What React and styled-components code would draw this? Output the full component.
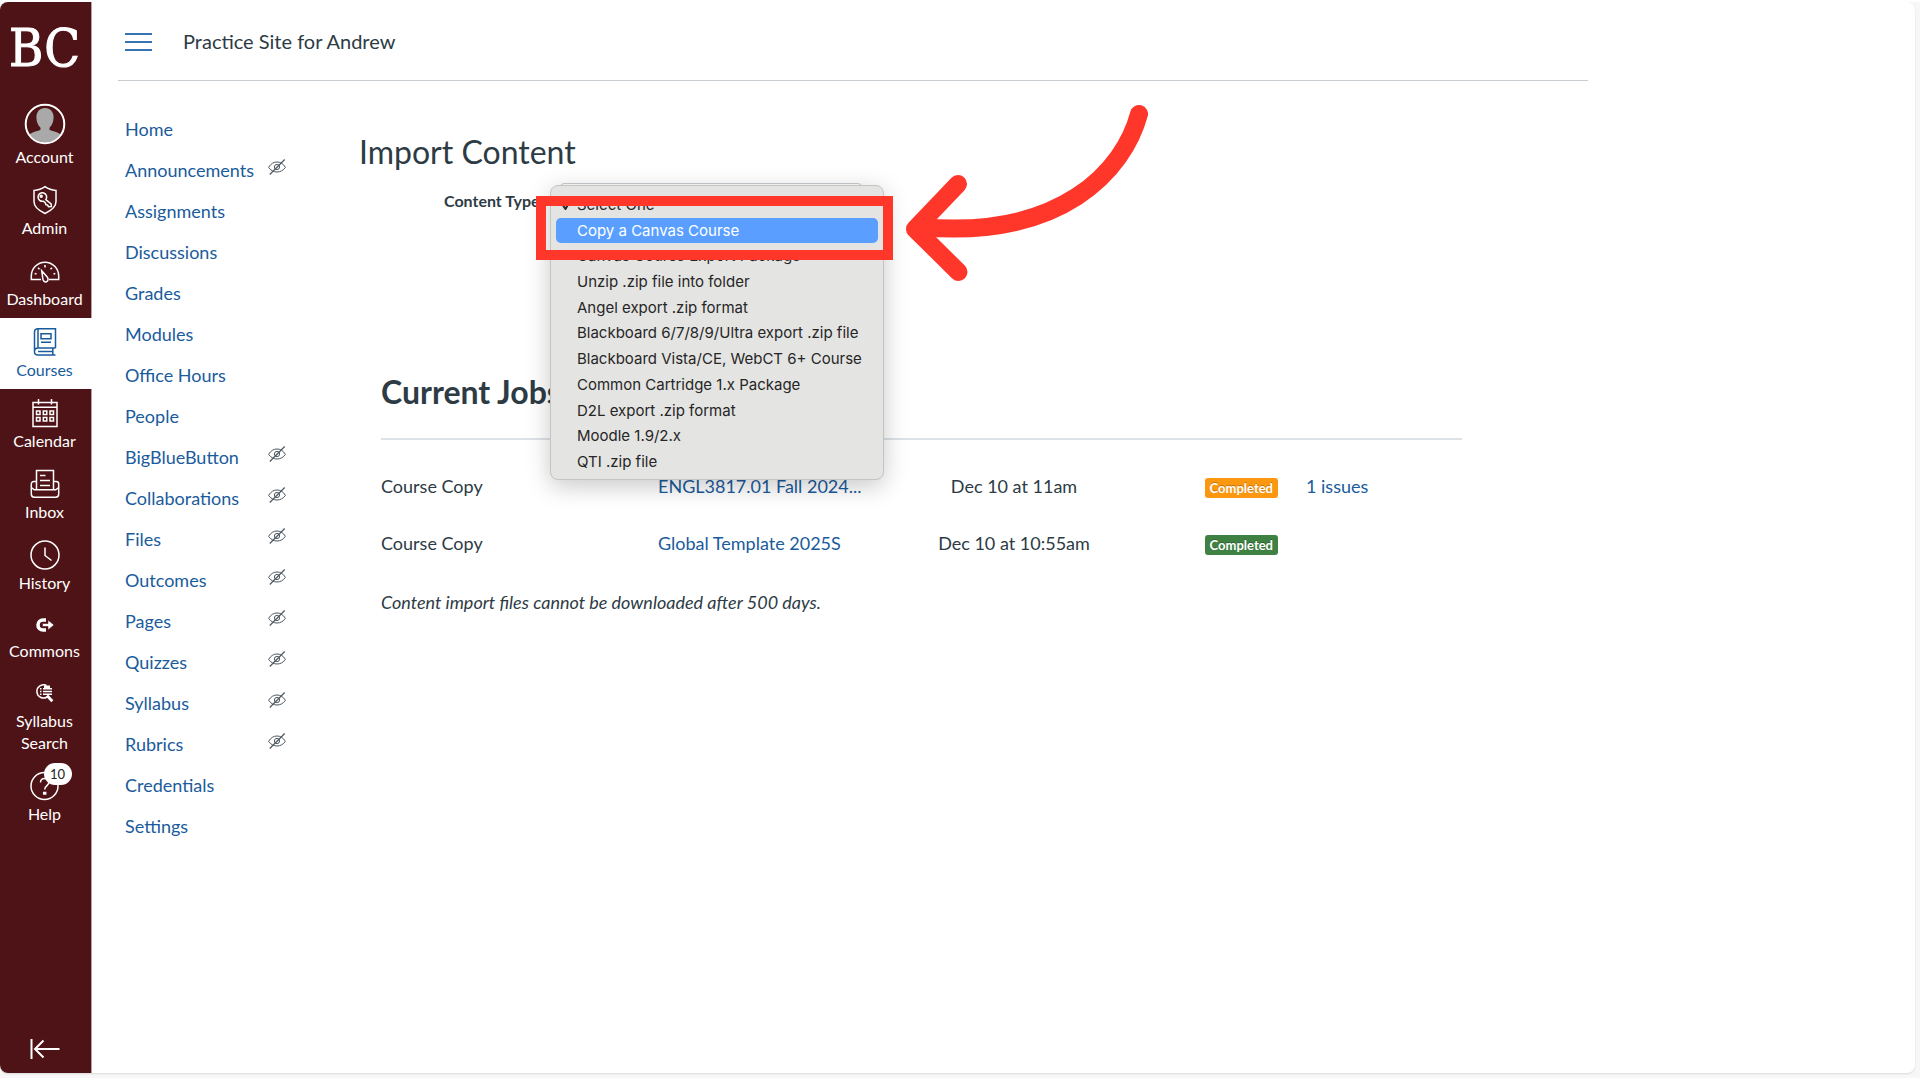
import React, { useState } from "react";
import styled, { createGlobalStyle, css } from "styled-components";

const GlobalStyle = createGlobalStyle`
  * {
    box-sizing: border-box;
  }

  body {
    margin: 0;
    background: #ffffff;
    color: #2d3b45;
    font-family: Lato, "Open Sans", sans-serif;
    font-size: 18px;
    line-height: 24px;
  }
`;

const colors = {
  maroon: "#4e1316",
  link: "#1a5b9c",
  text: "#2d3b45",
  red: "#ff372b",
  rule: "#c7cdd1",
};

/* ---------- page shell ---------- */

const Frame = styled.div`
  display: flex;
  min-height: calc(100vh - 4px);
  margin: 2px 0;
  padding: 0 5px 5px 0;
  background: #f7f7f7;
`;

const Card = styled.div`
  flex: 1;
  display: flex;
  min-width: 0;
  overflow: hidden;
  border-radius: 8px;
  background: #ffffff;
  box-shadow: 0 1px 2px rgba(0, 0, 0, 0.12);
`;

const Content = styled.div`
  flex: 1;
  min-width: 0;
  max-width: 1496px;
  padding-left: 26px;
`;

/* ---------- global navigation ---------- */

const GlobalNav = styled.nav`
  flex: none;
  display: flex;
  flex-direction: column;
  width: 92px;
  border-right: 1px solid #b9a1a2;
  background: ${colors.maroon};
`;

const Logo = styled.a`
  display: flex;
  align-items: center;
  justify-content: center;
  height: 92px;
  padding-right: 2px;
  color: #ffffff;
  font-family: "DejaVu Serif Condensed", "DejaVu Serif", serif;
  font-size: 52px;
  line-height: 60px;
  text-decoration: none;
  -webkit-text-stroke: 1px #ffffff;
`;

const NavItem = styled.a`
  display: flex;
  flex-direction: column;
  align-items: center;
  gap: 2px;
  padding: 9px 2px 8px 0;
  color: #ffffff;
  font-size: 16px;
  line-height: 22px;
  text-align: center;
  text-decoration: none;

  ${(props) =>
    props.$active &&
    css`
      margin-right: -1px;
      padding-right: 3px;
      background: #ffffff;
      color: ${colors.link};
    `}
`;

const NavIcon = styled.span`
  position: relative;
  display: flex;
  align-items: center;
  justify-content: center;
  height: ${(props) => props.$height || 30}px;
`;

const Badge = styled.span`
  position: absolute;
  top: -8px;
  left: 14px;
  width: 28px;
  border-radius: 11px;
  background: #ffffff;
  color: #222222;
  font-size: 13px;
  line-height: 22px;
`;

const Collapse = styled.button`
  display: flex;
  justify-content: center;
  margin-top: auto;
  padding: 9px 2px 9px 0;
  border: 0;
  background: none;
  color: #ffffff;
`;

/* ---------- header ---------- */

const Header = styled.header`
  display: flex;
  align-items: center;
  gap: 31px;
  height: 79px;
  padding-left: 7px;
  border-bottom: 1px solid ${colors.rule};
  font-size: 20px;
`;

const MenuButton = styled.button`
  display: flex;
  flex-direction: column;
  gap: 6px;
  width: 27px;
  padding: 2px 0 0;
  border: 0;
  background: none;

  span {
    height: 2px;
    background: #3574b0;
  }
`;

const Columns = styled.div`
  display: flex;
  align-items: flex-start;
`;

/* ---------- course navigation ---------- */

const CourseNav = styled.ul`
  flex: none;
  width: 241px;
  margin: 0;
  padding: 27px 73px 0 7px;
  list-style: none;

  li {
    display: flex;
    align-items: center;
    justify-content: space-between;
    height: 41px;
  }

  svg {
    margin-bottom: 5px;
  }
`;

const Link = styled.a`
  color: ${colors.link};
  text-decoration: none;
`;

/* ---------- import page ---------- */

const Main = styled.main`
  flex: 1;
  min-width: 0;
  padding-top: 51px;
`;

const Title = styled.h1`
  margin: 0 0 11px;
  font-size: 32px;
  font-weight: 400;
  line-height: 40px;
`;

const FormRow = styled.div`
  display: flex;
  align-items: flex-start;
  padding-left: 85px;

  label {
    width: 116px;
    font-size: 16px;
    font-weight: 700;
    line-height: 36px;
  }
`;

const SelectWrap = styled.div`
  position: relative;
  width: 302px;

  select {
    display: block;
    width: 100%;
    height: 38px;
    border: 1px solid ${colors.rule};
    border-radius: 4px;
    background: #ffffff;
    color: ${colors.text};
    font: inherit;
  }
`;

const Menu = styled.ul`
  position: absolute;
  z-index: 1;
  top: 2px;
  left: -10px;
  display: grid;
  grid-auto-rows: 1fr;
  width: 334px;
  height: 295px;
  margin: 0;
  padding: 6px 5px 4px;
  border: 1px solid #c4c4c3;
  border-radius: 8px;
  background: #e4e4e2;
  box-shadow: 0 6px 24px rgba(0, 0, 0, 0.22);
  color: #262626;
  font-family: Inter, sans-serif;
  font-size: 15px;
  list-style: none;
`;

const Option = styled.li`
  display: flex;
  align-items: center;
  padding-left: 6px;
  border-radius: 5px;
  white-space: nowrap;

  ${(props) =>
    props.$highlighted &&
    css`
      background: #5a9fff;
      color: #ffffff;
    `}
`;

const Tick = styled.span`
  display: flex;
  width: 15px;
`;

const Outline = styled.div`
  position: absolute;
  z-index: 2;
  top: 13px;
  left: -24px;
  width: 357px;
  height: 64px;
  border: 10px solid ${colors.red};
  pointer-events: none;
`;

const Arrow = styled.svg`
  position: absolute;
  z-index: 2;
  top: -83px;
  left: 340px;
  pointer-events: none;
`;

const Jobs = styled.section`
  max-width: 1103px;
  padding: 151px 0 0 22px;
`;

const JobsTitle = styled.h2`
  margin: 0 0 17px;
  padding-bottom: 26px;
  border-bottom: 2px solid #dde2e6;
  font-size: 32px;
  font-weight: 700;
  line-height: 40px;
`;

const JobTable = styled.table`
  width: 100%;
  border-collapse: collapse;
  table-layout: fixed;

  td {
    height: 57px;
    padding: 0;
    white-space: nowrap;
  }

  td:nth-child(1) {
    width: 277px;
  }

  td:nth-child(2) {
    width: 246px;
  }

  td:nth-child(3) {
    width: 220px;
    text-align: center;
  }

  td:nth-child(4) {
    width: 168px;
    padding-right: 14px;
    text-align: right;
  }

  td:nth-child(5) {
    padding-left: 14px;
  }
`;

const Status = styled.span`
  display: inline-block;
  padding: 0 5px;
  border-radius: 3px;
  background: ${(props) => (props.$warning ? "#fc9710" : "#3f8143")};
  color: #ffffff;
  font-size: 13px;
  font-weight: 700;
  line-height: 20px;
  text-shadow: 0 -1px 0 rgba(0, 0, 0, 0.25);
  vertical-align: middle;
`;

const Note = styled.p`
  margin: 19px 0 0;
  font-style: italic;
`;

/* ---------- icons ---------- */

const LineIcon = ({ size = 30, children, ...rest }) => (
  <svg
    width={size}
    height={size}
    viewBox="0 0 30 30"
    fill="none"
    stroke="currentColor"
    strokeWidth="1.5"
    aria-hidden="true"
    {...rest}
  >
    {children}
  </svg>
);

const AccountIcon = () => (
  <svg width="42" height="42" viewBox="0 0 42 42" aria-hidden="true">
    <clipPath id="avatar">
      <circle cx="21" cy="21" r="18.5" />
    </clipPath>
    <g clipPath="url(#avatar)" fill="#a9a9a9">
      <path d="M21 5c5.200 0 8.600 3.900 8.600 9.300 0 4.500-1.600 8.300-4.100 10.400v2.100c0 1 9.500 1.700 12.500 6.200V42H4v-9c3-4.500 12.500-5.200 12.500-6.200v-2.100c-2.500-2.100-4.100-5.900-4.100-10.400C12.400 8.900 15.800 5 21 5z" />
    </g>
    <circle cx="21" cy="21" r="19.300" fill="none" stroke="#ffffff" strokeWidth="2" />
  </svg>
);

const AdminIcon = () => (
  <LineIcon>
    <path d="M15 1.700c3.500 2.600 7.200 3.600 11 3.700v11.200c0 5.800-5.200 9.300-11 11.900-5.800-2.600-11-6.100-11-11.900V5.400c3.800-.1 7.500-1.100 11-3.700z" />
    <path d="M15.800 14.600l5.300 4.300.3 2.600-2.900.2-1-1.700-1.700-.3-.4-1.800-2-1.700a4.300 4.300 0 1 1 2.400-1.600z" />
    <circle cx="11.200" cy="11.300" r="1" />
  </LineIcon>
);

const DashboardIcon = () => (
  <LineIcon>
    <path d="M11 23.500H1.300V20a13.700 13.700 0 0 1 27.400 0v3.500H19" />
    <path d="M11.700 14.800l5.500 6.200c1.500 2 .9 4.300-.7 4.800-1.700.6-3.300-.8-3.600-2.600z" />
    <path d="M15 9v2.500M8 11.700l1.500 1.500M22 11.700l-1.500 1.500M4.700 17.500l1.800.5M25.300 17.500l-1.800.5" />
  </LineIcon>
);

const CoursesIcon = () => (
  <LineIcon>
    <path d="M25.500 21V1.800H8C5.800 1.800 4.500 3 4.500 5v20c0 2 1.500 3 3.500 3h17.500M4.500 24.300c0-2 1.500-3.300 3.500-3.300h17.500M8 1.800V21M8 24.500h14M22.800 21v7" />
    <path d="M11 6.800h10v5H11zM11 15.200h10" />
  </LineIcon>
);

const CalendarIcon = () => (
  <LineIcon>
    <path d="M3 28.500V4.500h24v24zM3 9.200h24M8.500 1v5.500M21.500 1v5.500" />
    <path d="M6.500 13h3.500v3.500H6.500zM13.300 13h3.500v3.500h-3.500zM20 13h3.500v3.500H20zM6.500 19.500h3.500V23H6.500zM13.300 19.500h3.500V23h-3.500zM20 19.500h3.500V23H20z" />
  </LineIcon>
);

const InboxIcon = () => (
  <LineIcon>
    <path d="M6.500 20.500V1.500h17v19M6.500 12.500H3.800c-1.500 0-2.500 1-2.500 2.500v10c0 2 1.200 3.200 3 3.200h21.400c1.800 0 3-1.200 3-3.200V15c0-1.500-1-2.500-2.500-2.500h-2.700M1.300 18.500l3 2.300h21.400l3-2.300" />
    <path d="M10 6.500h5.500M10 11.500h10M10 16.500h10" />
  </LineIcon>
);

const HistoryIcon = () => (
  <LineIcon>
    <circle cx="15" cy="15" r="14" />
    <path d="M15 7.500v8l6.500 5" />
  </LineIcon>
);

const CommonsIcon = () => (
  <svg width="18" height="18" viewBox="0 0 18 18" aria-hidden="true">
    <path
      d="M10 4H7a5 5 0 0 0 0 10h3"
      fill="none"
      stroke="currentColor"
      strokeWidth="3.600"
    />
    <path d="M6.500 7.500H12V4l6 5-6 5v-3.500H6.500z" fill="currentColor" stroke={colors.maroon} strokeWidth=".6" />
  </svg>
);

const SyllabusIcon = () => (
  <svg width="19" height="19" viewBox="0 0 19 19" fill="none" stroke="currentColor" aria-hidden="true">
    <path d="M11.500 1.500A6.600 6.600 0 1 0 12 13" strokeWidth="1.500" />
    <path d="M5 4.800h1.500M5 7.500h1.500M5 10.200h1.500M8 4.800h9M8 7.500h9M8 10.200h9" strokeWidth="1.600" />
    <path d="M9 3h6M12 11.500l5.300 5.800" strokeWidth="2.800" />
  </svg>
);

const HelpIcon = () => (
  <LineIcon>
    <circle cx="14.500" cy="15" r="13.500" />
    <path d="M10.500 11.500c0-2.500 1.800-4 4.200-4 2.500 0 4.200 1.600 4.200 3.800 0 3.400-4.200 3.400-4.200 7.200" />
    <path d="M13.700 21.500h2v1.500h-2z" fill="currentColor" />
  </LineIcon>
);

const CollapseIcon = () => (
  <LineIcon>
    <path d="M1.500 5v20M5 15h24.500M13.500 6.500L5 15l8.500 8.500" strokeWidth="2" />
  </LineIcon>
);

const HiddenIcon = () => (
  <svg width="18" height="16" viewBox="0 0 18 16" fill="none" stroke="#4b5760" role="img" aria-label="Hidden from students">
    <path d="M.6 8.300C2.800 4.700 5.700 3 9 3s6.200 1.700 8.400 5.300C15.200 11.600 12.300 13 9 13S2.800 11.600.6 8.300z" />
    <circle cx="9" cy="8" r="2.600" />
    <path d="M1.800 15.500L16.700.5" strokeWidth="1.200" />
  </svg>
);

/* ---------- data ---------- */

const globalLinks = [
  { label: "Account", icon: AccountIcon, height: 41 },
  { label: "Admin", icon: AdminIcon },
  { label: "Dashboard", icon: DashboardIcon },
  { label: "Courses", icon: CoursesIcon, active: true },
  { label: "Calendar", icon: CalendarIcon },
  { label: "Inbox", icon: InboxIcon },
  { label: "History", icon: HistoryIcon },
  { label: "Commons", icon: CommonsIcon, height: 27 },
  { label: "Syllabus Search", icon: SyllabusIcon, height: 29 },
  { label: "Help", icon: HelpIcon, badge: 10 },
];

const courseLinks = [
  { label: "Home" },
  { label: "Announcements", hidden: true },
  { label: "Assignments" },
  { label: "Discussions" },
  { label: "Grades" },
  { label: "Modules" },
  { label: "Office Hours" },
  { label: "People" },
  { label: "BigBlueButton", hidden: true },
  { label: "Collaborations", hidden: true },
  { label: "Files", hidden: true },
  { label: "Outcomes", hidden: true },
  { label: "Pages", hidden: true },
  { label: "Quizzes", hidden: true },
  { label: "Syllabus", hidden: true },
  { label: "Rubrics", hidden: true },
  { label: "Credentials" },
  { label: "Settings" },
];

const contentTypes = [
  "Select One",
  "Copy a Canvas Course",
  "Canvas Course Export Package",
  "Unzip .zip file into folder",
  "Angel export .zip format",
  "Blackboard 6/7/8/9/Ultra export .zip file",
  "Blackboard Vista/CE, WebCT 6+ Course",
  "Common Cartridge 1.x Package",
  "D2L export .zip format",
  "Moodle 1.9/2.x",
  "QTI .zip file",
];

const jobs = [
  { source: "ENGL3817.01 Fall 2024...", date: "Dec 10 at 11am", issues: "1 issues" },
  { source: "Global Template 2025S", date: "Dec 10 at 10:55am" },
];

const ContentTypeField = () => {
  const [highlighted, setHighlighted] = useState(1);

  return (
    <FormRow>
      <label htmlFor="content-type">Content Type:</label>
      <SelectWrap>
        <select id="content-type" defaultValue="Select One">
          <option>Select One</option>
        </select>
        <Menu role="listbox" aria-label="Content Type">
          {contentTypes.map((type, i) => (
            <Option
              key={type}
              role="option"
              aria-selected={i === 0}
              $highlighted={i === highlighted}
              onMouseEnter={() => setHighlighted(i)}
            >
              <Tick>
                {i === 0 && (
                  <svg width="9" height="10" viewBox="0 0 9 10" fill="none" stroke="currentColor" strokeWidth="2">
                    <path d="M1 5.500L3.500 9 8 1" />
                  </svg>
                )}
              </Tick>
              {type}
            </Option>
          ))}
        </Menu>
        <Outline />
        <Arrow
          width="250"
          height="190"
          viewBox="900 100 250 190"
          fill="none"
          stroke={colors.red}
          strokeWidth="18"
          strokeLinecap="round"
          strokeLinejoin="round"
        >
          <path d="M1139 114C1124 170 1062 240 920 227" />
          <path d="M958 184L915 229l43.500 43" />
        </Arrow>
      </SelectWrap>
    </FormRow>
  );
};

const App = () => (
  <>
    <GlobalStyle />
    <Frame>
      <Card>
        <GlobalNav aria-label="Global">
          <Logo href="#">BC</Logo>
          {globalLinks.map(({ label, icon: Icon, height, active, badge }) => (
            <NavItem key={label} href="#" $active={active}>
              <NavIcon $height={height}>
                <Icon />
                {badge && <Badge>{badge}</Badge>}
              </NavIcon>
              {label}
            </NavItem>
          ))}
          <Collapse aria-label="Minimize global navigation">
            <CollapseIcon />
          </Collapse>
        </GlobalNav>

        <Content>
          <Header>
            <MenuButton aria-label="Course menu">
              <span />
              <span />
              <span />
            </MenuButton>
            Practice Site for Andrew
          </Header>

          <Columns>
            <CourseNav>
              {courseLinks.map((link) => (
                <li key={link.label}>
                  <Link href="#">{link.label}</Link>
                  {link.hidden && <HiddenIcon />}
                </li>
              ))}
            </CourseNav>

            <Main>
              <Title>Import Content</Title>
              <ContentTypeField />

              <Jobs>
                <JobsTitle>Current Jobs</JobsTitle>
                <JobTable>
                  <tbody>
                    {jobs.map((job) => (
                      <tr key={job.source}>
                        <td>Course Copy</td>
                        <td>
                          <Link href="#">{job.source}</Link>
                        </td>
                        <td>{job.date}</td>
                        <td>
                          <Status $warning={Boolean(job.issues)}>Completed</Status>
                        </td>
                        <td>{job.issues && <Link href="#">{job.issues}</Link>}</td>
                      </tr>
                    ))}
                  </tbody>
                </JobTable>
                <Note>Content import files cannot be downloaded after 500 days.</Note>
              </Jobs>
            </Main>
          </Columns>
        </Content>
      </Card>
    </Frame>
  </>
);

export default App;
